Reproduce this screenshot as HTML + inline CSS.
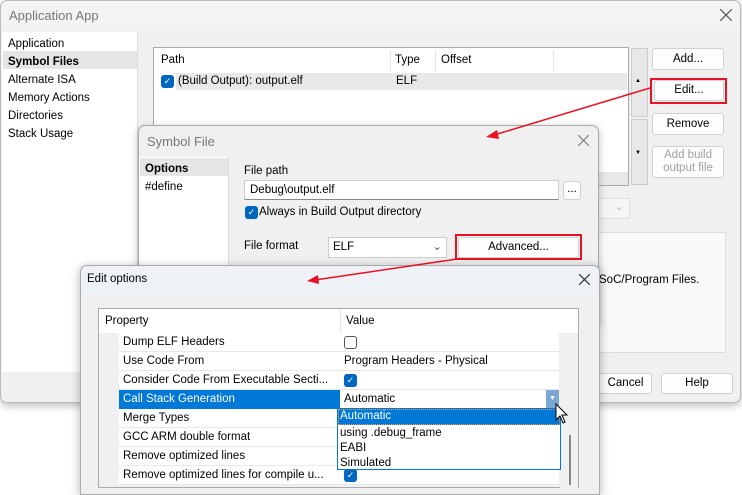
<!DOCTYPE html>
<html><head><meta charset="utf-8"><style>
*{box-sizing:border-box;margin:0;padding:0}
body{width:742px;height:484px;background:#fff;font-family:"Liberation Sans",sans-serif;font-size:11.5px;color:#000;position:relative;overflow:hidden}
.a{position:absolute}
.btn{position:absolute;background:#fdfdfd;border:1px solid #d0d0d0;border-radius:3px;text-align:center;font-size:11.5px}
.red{position:absolute;border:2px solid #e81123}
.chk{position:absolute;width:13px;height:13px;background:#0067c0;border-radius:3px;color:#fff;font-size:9px;line-height:13px;text-align:center}
.row{position:absolute;left:119px;width:440px;height:19px;border-bottom:1px solid #e8e8e8;background:#fff}
.row span{position:absolute;left:4px;top:3px}
.row b{position:absolute;left:225px;top:3px;font-weight:normal}
.x{position:absolute}
</style></head><body>
<!-- main window -->
<div class="a" style="left:0;top:0;width:741px;height:403px;background:#f0f0f0;border:1px solid #bbb;border-radius:7px;box-shadow:0 3px 8px rgba(0,0,0,.25)"></div>
<div class="a" style="left:1px;top:1px;width:739px;height:30px;background:#f3f3f3;border-radius:7px 7px 0 0"></div>
<div class="a" style="left:9px;top:8px;color:#777;font-size:13px">Application App</div>
<svg class="x" style="left:720px;top:9px" width="12" height="12"><path d="M0 0L12 12M12 0L0 12" stroke="#555" stroke-width="1.2"/></svg>
<div class="a" style="left:2px;top:32px;width:136px;height:340px;background:#fff;border-right:1px solid #ddd"></div>
<div class="a" style="left:3px;top:51px;width:134px;height:18px;background:#e5e5e5"></div>
<div class="a" style="left:8px;top:35px;line-height:18px">Application<br><b>Symbol Files</b><br>Alternate ISA<br>Memory Actions<br>Directories<br>Stack Usage</div>
<!-- list -->
<div class="a" style="left:153px;top:47px;width:476px;height:139px;background:#fff;border:1px solid #aaa"></div>
<div class="a" style="left:154px;top:172px;width:474px;height:13px;background:#e8e8e8"></div>
<div class="a" style="left:161px;top:54px">Path</div>
<div class="a" style="left:390px;top:50px;width:1px;height:22px;background:#e5e5e5"></div>
<div class="a" style="left:395px;top:54px">Type</div>
<div class="a" style="left:435px;top:50px;width:1px;height:22px;background:#e5e5e5"></div>
<div class="a" style="left:441px;top:54px">Offset</div>
<div class="a" style="left:553px;top:50px;width:1px;height:22px;background:#e5e5e5"></div>
<div class="a" style="left:176px;top:73px;width:451px;height:17px;background:#e8e8e8"></div>
<div class="chk" style="left:161px;top:75px">✓</div>
<div class="a" style="left:178px;top:75px">(Build Output): output.elf</div>
<div class="a" style="left:396px;top:75px">ELF</div>
<div class="a" style="left:631px;top:48px;width:17px;height:69px;background:#e8e8e8;border:1px solid #ccc"></div>
<div class="a" style="left:631px;top:119px;width:17px;height:66px;background:#e8e8e8;border:1px solid #ccc"></div>
<div class="a" style="left:635px;top:78px;font-size:6px">▲</div>
<div class="a" style="left:635px;top:150px;font-size:6px">▼</div>
<div class="btn" style="left:652px;top:48px;width:72px;height:22px;line-height:20px">Add...</div>
<div class="btn" style="left:654px;top:80px;width:70px;height:21px;line-height:19px">Edit...</div>
<div class="red" style="left:650px;top:78px;width:77px;height:26px"></div>
<div class="btn" style="left:652px;top:113px;width:72px;height:22px;line-height:20px">Remove</div>
<div class="btn" style="left:652px;top:146px;width:72px;height:32px;color:#a0a0a0;line-height:13px;padding-top:2px">Add build<br>output file</div>
<div class="a" style="left:588px;top:198px;width:42px;height:21px;border:1px solid #ddd;background:#f5f5f5;color:#bbb;text-align:right;padding-right:5px">⌄</div>
<div class="a" style="left:598px;top:232px;width:128px;height:121px;background:#f9f9f9;border:1px solid #ddd"></div>
<div class="a" style="left:599px;top:274px">SoC/Program Files.</div>
<div class="btn" style="left:599px;top:373px;width:53px;height:21px;line-height:19px">Cancel</div>
<div class="btn" style="left:661px;top:373px;width:72px;height:21px;line-height:19px">Help</div>
<!-- Symbol File dialog -->
<div class="a" style="left:138px;top:125px;width:461px;height:200px;background:#f0f0f0;border:1px solid #aaa;border-radius:7px 7px 0 0;box-shadow:0 2px 8px rgba(0,0,0,.25)"></div>
<div class="a" style="left:147px;top:134px;color:#777;font-size:13px">Symbol File</div>
<svg class="x" style="left:578px;top:135px" width="11" height="11"><path d="M0 0L11 11M11 0L0 11" stroke="#777" stroke-width="1.1"/></svg>
<div class="a" style="left:139px;top:157px;width:90px;height:150px;background:#fff;border-right:1px solid #ddd"></div>
<div class="a" style="left:140px;top:158px;width:88px;height:18px;background:#e5e5e5"></div>
<div class="a" style="left:145px;top:160px;line-height:18px"><b>Options</b><br>#define</div>
<div class="a" style="left:244px;top:165px">File path</div>
<div class="a" style="left:244px;top:180px;width:315px;height:20px;background:#fff;border:1px solid #ccc;border-bottom-color:#888;padding:3px 5px">Debug\output.elf</div>
<div class="btn" style="left:563px;top:181px;width:18px;height:19px;line-height:15px">...</div>
<div class="chk" style="left:245px;top:206px">✓</div>
<div class="a" style="left:259px;top:206px">Always in Build Output directory</div>
<div class="a" style="left:244px;top:240px">File format</div>
<div class="a" style="left:328px;top:237px;width:119px;height:21px;background:#fff;border:1px solid #ccc;padding:3px 4px">ELF<span style="position:absolute;right:4px;top:1px;color:#555">⌄</span></div>
<div class="btn" style="left:458px;top:237px;width:121px;height:21px;line-height:19px">Advanced...</div>
<div class="red" style="left:455px;top:234px;width:127px;height:26px"></div>
<!-- Edit options -->
<div class="a" style="left:80px;top:265px;width:520px;height:230px;background:#f0f0f0;border:1px solid #aaa;border-radius:7px 7px 0 0;box-shadow:0 2px 10px rgba(0,0,0,.3)"></div>
<div class="a" style="left:81px;top:266px;width:518px;height:29px;background:#eef2f7;border-radius:7px 7px 0 0"></div>
<div class="a" style="left:87px;top:273px">Edit options</div>
<svg class="x" style="left:579px;top:274px" width="11" height="11"><path d="M0 0L11 11M11 0L0 11" stroke="#333" stroke-width="1.2"/></svg>
<div class="a" style="left:98px;top:308px;width:481px;height:180px;background:#f0f0f0;border:1px solid #aaa"></div>
<div class="a" style="left:99px;top:309px;width:479px;height:24px;background:#fff"></div>
<div class="a" style="left:105px;top:315px">Property</div>
<div class="a" style="left:340px;top:309px;width:1px;height:24px;background:#e5e5e5"></div>
<div class="a" style="left:346px;top:315px">Value</div>
<div class="a" style="left:560px;top:333px;width:18px;height:155px;background:#f0f0f0"></div>
<div class="a" style="left:569px;top:435px;width:2px;height:50px;background:#888"></div>
<div class="row" style="top:333px"><span>Dump ELF Headers</span><i style="position:absolute;left:225px;top:3px;width:13px;height:13px;border:1px solid #555;border-radius:3px;background:#fff"></i></div>
<div class="row" style="top:352px"><span>Use Code From</span><b>Program Headers - Physical</b></div>
<div class="row" style="top:371px"><span>Consider Code From Executable Secti...</span><i class="chk" style="left:225px;top:3px;font-style:normal">✓</i></div>
<div class="row" style="top:390px;background:#fff"><span style="left:0;top:0;width:221px;height:19px;background:#0078d7;color:#fff;padding:3px 4px">Call Stack Generation</span><b>Automatic</b><i style="position:absolute;left:427px;top:0;width:13px;height:18px;background:#7ba7d4;color:#fff;font-size:7px;text-align:center;line-height:18px;font-style:normal">▼</i></div>
<div class="row" style="top:409px"><span>Merge Types</span></div>
<div class="row" style="top:428px"><span>GCC ARM double format</span></div>
<div class="row" style="top:447px"><span>Remove optimized lines</span></div>
<div class="row" style="top:466px"><span>Remove optimized lines for compile u...</span><i class="chk" style="left:225px;top:3px;font-style:normal">✓</i></div>
<!-- dropdown -->
<div class="a" style="left:337px;top:408px;width:224px;height:62px;background:#fff;border:1px solid #0078d7"></div>
<div class="a" style="left:338px;top:409px;width:222px;height:16px;background:#0078d7;color:#fff;outline:1px dotted #f0a040;outline-offset:-1px;padding:1px 2px">Automatic</div>
<div class="a" style="left:340px;top:426px;line-height:15px">using .debug_frame<br>EABI<br>Simulated</div>
<!-- cursor -->
<svg class="a" style="left:555px;top:403px" width="14" height="22"><path d="M1 1 L1 17 L5 13 L8 20 L10 19 L7 12 L12 12 Z" fill="#fff" stroke="#000" stroke-width="1"/></svg>
<!-- arrows -->
<svg class="a" style="left:0;top:0" width="742" height="484">
<line x1="650" y1="88" x2="494" y2="135" stroke="#e81123" stroke-width="1.5"/>
<polygon points="486,137 497,130 499,139" fill="#e81123"/>
<line x1="457" y1="259" x2="315" y2="280" stroke="#e81123" stroke-width="1.5"/>
<polygon points="307,281 318,275 319,284" fill="#e81123"/>
</svg>
</body></html>
